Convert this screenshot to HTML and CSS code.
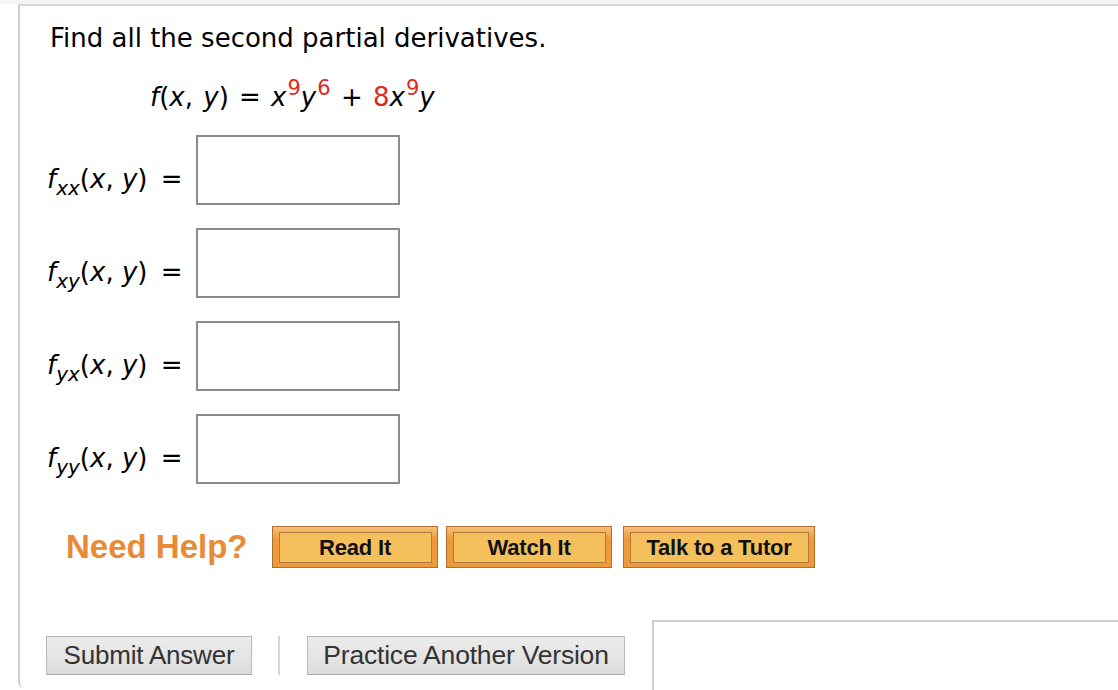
FILE: index.html
```html
<!DOCTYPE html>
<html>
<head>
<meta charset="utf-8">
<link rel="stylesheet" href="styles.css">
</head>
<body>
<div class="topstrip"></div>
<div class="panel">
  <p class="prompt">Find all the second partial derivatives.</p>
  <p class="formula"><i>f</i>(<i>x</i>, <i>y</i>) = <i>x</i><sup class="red">9</sup><i>y</i><sup class="red">6</sup> + <span class="red">8</span><i>x</i><sup class="red">9</sup><i>y</i></p>

  <div class="rows">
    <div class="row">
      <span class="label"><i>f</i><sub><i>xx</i></sub>(<i>x</i>, <i>y</i>) <span class="eq">=</span></span>
      <span class="answer"></span>
    </div>
    <div class="row">
      <span class="label"><i>f</i><sub><i>xy</i></sub>(<i>x</i>, <i>y</i>) <span class="eq">=</span></span>
      <span class="answer"></span>
    </div>
    <div class="row">
      <span class="label"><i>f</i><sub><i>yx</i></sub>(<i>x</i>, <i>y</i>) <span class="eq">=</span></span>
      <span class="answer"></span>
    </div>
    <div class="row">
      <span class="label"><i>f</i><sub><i>yy</i></sub>(<i>x</i>, <i>y</i>) <span class="eq">=</span></span>
      <span class="answer"></span>
    </div>
  </div>

  <div class="help">
    <span class="help-title">Need Help?</span>
    <span class="hbtn w1"><span class="hbtn-in">Read It</span></span>
    <span class="hbtn w2"><span class="hbtn-in">Watch It</span></span>
    <span class="hbtn w3"><span class="hbtn-in">Talk to a Tutor</span></span>
  </div>

  <div class="actions">
    <span class="gbtn submit">Submit Answer</span>
    <span class="sep"></span>
    <span class="gbtn practice">Practice Another Version</span>
    <div class="sidebox"></div>
  </div>
</div>
</body>
</html>
```

FILE: styles.css
```css
html, body {
  margin: 0;
  padding: 0;
  background: #ffffff;
  overflow: hidden;
}
body {
  width: 1118px;
  height: 690px;
  font-family: "DejaVu Sans", Verdana, sans-serif;
  color: #000;
}
.topstrip {
  height: 4px;
  background: #f5f5f5;
}
.panel {
  margin-left: 18px;
  border-top: 2px solid #dadada;
  border-left: 2px solid #cdcdcd;
  border-bottom-left-radius: 6px;
  height: 684px;
  box-sizing: border-box;
  padding-left: 30px;
}
.prompt {
  margin: 0;
  padding-top: 17px;
  font-size: 26px;
  line-height: 30px;
}
.formula {
  margin: 29px 0 0 100px;
  font-size: 26px;
  line-height: 30px;
  word-spacing: 2px;
}
.formula sup {
  font-size: 21px;
  vertical-align: 11px;
  line-height: 0;
  margin-left: 1px;
}
.red { color: #e0291e; }
.rows {
  margin-top: 23px;
  display: flex;
  flex-direction: column;
  gap: 23px;
}
.row {
  display: flex;
  align-items: center;
  height: 70px;
  margin-left: -3px;
}
.label {
  width: 149px;
  font-size: 26px;
  line-height: 30px;
  white-space: nowrap;
  padding-top: 18px;
}
.label sub {
  font-size: 20px;
  vertical-align: -7px;
  line-height: 0;
}
.eq { margin-left: 5px; }
.answer {
  display: block;
  width: 200px;
  height: 66px;
  border: 2px solid #8c8c8c;
  background: #fff;
}
.help {
  margin-top: 42px;
  margin-left: 16px;
  display: flex;
  align-items: center;
  height: 42px;
}
.help-title {
  font-family: "Liberation Sans", Arial, sans-serif;
  font-weight: bold;
  font-size: 33px;
  color: #e98a35;
  margin-right: 24px;
}
.hbtn {
  display: flex;
  box-sizing: border-box;
  height: 42px;
  border: 1px solid #b26f2c;
  background: linear-gradient(#f7c07a, #ee9a3c 30%, #ee9a3c);
  padding: 5px 5px 4px 6px;
  margin-right: 8px;
}
.hbtn-in {
  flex: 1;
  display: flex;
  align-items: center;
  justify-content: center;
  border: 1px solid #b07a3c;
  background: #f5bf5c;
  font-family: "Liberation Sans", Arial, sans-serif;
  font-weight: bold;
  font-size: 22px;
  color: #111;
  letter-spacing: -0.2px;
}
.w1 { width: 166px; }
.w2 { width: 166px; margin-right: 11px; }
.w3 { width: 192px; }
.actions {
  margin-top: 52px;
  display: flex;
  align-items: flex-start;
  margin-left: -4px;
}
.gbtn {
  margin-top: 16px;
  box-sizing: border-box;
  height: 39px;
  display: flex;
  align-items: center;
  justify-content: center;
  background: linear-gradient(#ececec, #dddddd);
  border: 1px solid #b9b9b9;
  border-bottom-color: #a8a8a8;
  font-family: "Liberation Sans", Arial, sans-serif;
  font-size: 26px;
  color: #333;
  letter-spacing: -0.2px;
}
.submit { width: 206px; }
.sep {
  margin: 16px 27px 0 26px;
  width: 2px;
  height: 39px;
  background: #d6d6d6;
}
.practice { width: 318px; font-size: 26.5px; }
.sidebox {
  margin-left: 27px;
  flex: 1;
  height: 80px;
  border-top: 2px solid #cdcdcd;
  border-left: 2px solid #cdcdcd;
  margin-right: -10px;
}
```
